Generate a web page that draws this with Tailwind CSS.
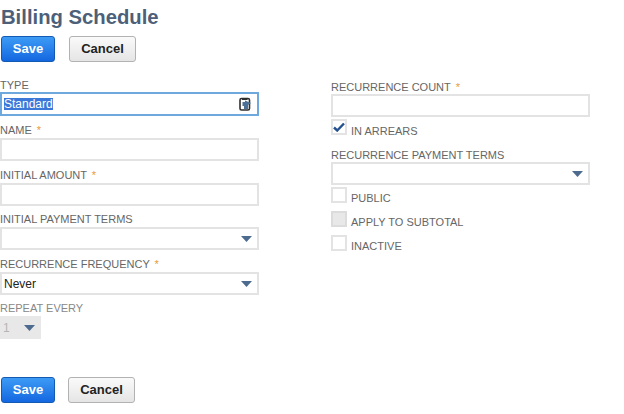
<!DOCTYPE html>
<html lang="en">
<head>
  <meta charset="UTF-8">
  <title>Billing Schedule</title>
  <script src="https://cdn.jsdelivr.net/npm/@tailwindcss/browser@4"></script>
</head>
<body class="bg-white w-[624px] h-[414px] overflow-hidden font-['Liberation_Sans',Arial,sans-serif]">
  <h1 class="h-[36px] pt-[6px] pl-[1px] text-[20.25px] leading-[23px] font-bold text-[#4d5f79]">Billing Schedule</h1>

  <!-- top buttons -->
  <div class="flex h-[26px] pl-[1px]">
    <button class="w-[54px] rounded-[3px] border border-[#125ab2] bg-gradient-to-b from-[#3d9bf5] to-[#1467e0] text-[13px] font-bold text-white">Save</button>
    <button class="ml-[14px] w-[67px] rounded-[3px] border border-[#b2b2b2] bg-gradient-to-b from-[#fafafa] to-[#e5e5e5] text-[13px] font-bold text-[#222]">Cancel</button>
  </div>

  <div class="flex mt-[16px]">
    <!-- left column -->
    <div class="w-[259px]">
      <label class="block h-[14px] text-[11px] leading-[14px] text-[#666]">TYPE</label>
      <div class="flex items-center justify-between h-[24px] border-2 border-[#6fa8dc] pl-[2px] pr-[5px] text-[12px] text-[#222]">
        <span class="bg-[#3b78d8] text-white leading-[12px]">Standard</span>
        <svg width="13" height="14" viewBox="0 0 13 14"><rect x="1" y="1.5" width="9.5" height="11.5" rx="1.5" fill="#fff" stroke="#2f2f2f" stroke-width="1.6"/><path d="M3 1h5.500v2H3z" fill="#2f2f2f"/><path d="M3.500 5h2.500v-1.500l6 2.500-3 2v4h-4v-3h-1.500z" fill="#4d7196"/></svg>
      </div>

      <label class="block mt-[7px] h-[14px] text-[11px] leading-[14px] text-[#666]">NAME <span class="ml-[2px] text-[#e69a3a]">*</span></label>
      <div class="mt-[1px] h-[23px] border-2 border-[#e3e3e3]"></div>

      <label class="block mt-[7px] h-[14px] text-[11px] leading-[14px] text-[#666]">INITIAL AMOUNT <span class="ml-[2px] text-[#e69a3a]">*</span></label>
      <div class="mt-[1px] h-[23px] border-2 border-[#e3e3e3]"></div>

      <label class="block mt-[6px] h-[14px] text-[11px] leading-[14px] text-[#666]">INITIAL PAYMENT TERMS</label>
      <div class="flex items-center justify-end mt-[1px] h-[23px] border-2 border-[#e3e3e3] pr-[5px]">
        <svg width="11" height="6" viewBox="0 0 11 6"><path d="M0 0h11L5.500 6z" fill="#4d6a8f"/></svg>
      </div>

      <label class="block mt-[7px] h-[14px] text-[11px] leading-[14px] text-[#666]">RECURRENCE FREQUENCY <span class="ml-[2px] text-[#e69a3a]">*</span></label>
      <div class="flex items-center justify-between mt-[1px] h-[23px] border-2 border-[#e3e3e3] pl-[2px] pr-[5px] text-[12px] text-[#222]">
        <span>Never</span>
        <svg width="11" height="6" viewBox="0 0 11 6"><path d="M0 0h11L5.500 6z" fill="#4d6a8f"/></svg>
      </div>

      <label class="block mt-[6px] h-[14px] text-[11px] leading-[14px] text-[#888]">REPEAT EVERY</label>
      <div class="flex items-center justify-between mt-[1px] w-[41px] h-[23px] bg-[#e8e8e8] pl-[3px] pr-[6px] text-[12px] text-[#b5b5b5]">
        <span>1</span>
        <svg width="11" height="6" viewBox="0 0 11 6"><path d="M0 0h11L5.500 6z" fill="#4d6a8f"/></svg>
      </div>
    </div>

    <!-- right column -->
    <div class="ml-[72px] w-[259px] pt-[2px]">
      <label class="block h-[14px] text-[11px] leading-[14px] text-[#666]">RECURRENCE COUNT <span class="ml-[2px] text-[#e69a3a]">*</span></label>
      <div class="h-[23px] border-2 border-[#e3e3e3]"></div>

      <div class="flex mt-[2px] h-[16px]">
        <span class="flex items-center justify-center w-[16px] h-[16px] border-2 border-[#e3e3e3]">
          <svg width="12" height="10" viewBox="0 0 12 10"><path d="M1 5.500l3.200 3L11 1.500" fill="none" stroke="#24528f" stroke-width="2.400"/></svg>
        </span>
        <span class="ml-[4px] pt-[5px] text-[11px] leading-[14px] text-[#666]">IN ARREARS</span>
      </div>

      <label class="block mt-[13px] h-[14px] text-[11px] leading-[14px] text-[#666]">RECURRENCE PAYMENT TERMS</label>
      <div class="flex items-center justify-end h-[23px] border-2 border-[#e3e3e3] pr-[5px]">
        <svg width="11" height="6" viewBox="0 0 11 6"><path d="M0 0h11L5.500 6z" fill="#4d6a8f"/></svg>
      </div>

      <div class="flex mt-[2px] h-[16px]">
        <span class="w-[16px] h-[16px] border-2 border-[#e3e3e3]"></span>
        <span class="ml-[4px] pt-[4px] text-[11px] leading-[14px] text-[#666]">PUBLIC</span>
      </div>
      <div class="flex mt-[8px] h-[16px]">
        <span class="w-[16px] h-[16px] border-2 border-[#dcdcdc] bg-[#e8e8e8]"></span>
        <span class="ml-[4px] pt-[4px] text-[11px] leading-[14px] text-[#666]">APPLY TO SUBTOTAL</span>
      </div>
      <div class="flex mt-[8px] h-[16px]">
        <span class="w-[16px] h-[16px] border-2 border-[#e3e3e3]"></span>
        <span class="ml-[4px] pt-[4px] text-[11px] leading-[14px] text-[#666]">INACTIVE</span>
      </div>
    </div>
  </div>

  <!-- bottom buttons -->
  <div class="flex h-[26px] mt-[38px] pl-[1px]">
    <button class="w-[54px] rounded-[3px] border border-[#125ab2] bg-gradient-to-b from-[#3d9bf5] to-[#1467e0] text-[13px] font-bold text-white">Save</button>
    <button class="ml-[13px] w-[67px] rounded-[3px] border border-[#b2b2b2] bg-gradient-to-b from-[#fafafa] to-[#e5e5e5] text-[13px] font-bold text-[#222]">Cancel</button>
  </div>
</body>
</html>
